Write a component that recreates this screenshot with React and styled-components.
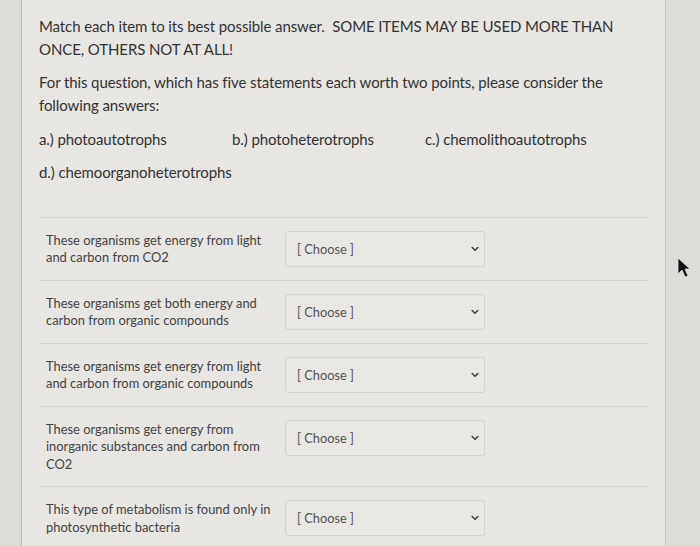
import React from 'react'
import styled, { createGlobalStyle } from 'styled-components'

const statements = [
    ['These organisms get energy from light', 'and carbon from CO2'],
    ['These organisms get both energy and', 'carbon from organic compounds'],
    ['These organisms get energy from light', 'and carbon from organic compounds'],
    ['These organisms get energy from', 'inorganic substances and carbon from', 'CO2'],
    ['This type of metabolism is found only in', 'photosynthetic bacteria'],
]

const App = () => {
    return (
        <Page>
            <GlobalStyle />
            <Panel>
                <Para>
                    Match each item to its best possible answer.&nbsp; SOME ITEMS MAY BE USED MORE THAN
                    <br />ONCE, OTHERS NOT AT ALL!
                </Para>
                <Para>
                    For this question, which has five statements each worth two points, please consider the
                    <br />following answers:
                </Para>
                <Answers>
                    <span>a.) photoautotrophs</span>
                    <span>b.) photoheterotrophs</span>
                    <span>c.) chemolithoautotrophs</span>
                    <span>d.) chemoorganoheterotrophs</span>
                </Answers>
                <List>
                    {statements.map((lines, i) => (
                        <Row key={i}>
                            <Statement>
                                {lines.map((l, j) => <div key={j}>{l}</div>)}
                            </Statement>
                            <Select>
                                <span>[ Choose ]</span>
                                <svg width="8" height="6" viewBox="0 0 8 6">
                                    <path d="M1.2 1.5 L4 4.3 L6.8 1.5" fill="none" stroke="#444" strokeWidth="1.6" strokeLinecap="round" strokeLinejoin="round" />
                                </svg>
                            </Select>
                        </Row>
                    ))}
                </List>
            </Panel>
            <Pointer width="14" height="22" viewBox="0 0 14 22">
                <path d="M1 1 L1 17 L5 13 L8 20 L11 19 L8 12 L13 12 Z" fill="#111" stroke="#e6e5e1" strokeWidth="0.8" />
            </Pointer>
        </Page>
    )
}

export default App

const GlobalStyle = createGlobalStyle`
    body {
        margin: 0;
        background: #dcdbd7;
        font-family: Lato, "Open Sans", sans-serif;
    }
`
const Page = styled.div`
    position: relative;
    width: 700px;
    height: 546px;
    overflow: hidden;
`
const Panel = styled.div`
    margin-left: 21px;
    width: 645px;
    height: 546px;
    box-sizing: border-box;
    padding: 15px 0 0 17px;
    background: #e7e6e2;
    border-left: 1px solid #b9b9b5;
    border-right: 1px solid #c2c2be;
`
const Para = styled.p`
    margin: 0 0 10px;
    font-size: 15px;
    line-height: 23px;
    color: #333;
    letter-spacing: -0.1px;
`
const Answers = styled.div`
    display: grid;
    grid-template-columns: 193px 193px 190px;
    row-gap: 10px;
    margin-top: 11px;
    font-size: 15px;
    line-height: 23px;
    color: #333;
    letter-spacing: -0.1px;
`
const List = styled.div`
    margin: 33px 17px 0 1px;
`
const Row = styled.div`
    display: flex;
    align-items: flex-start;
    gap: 7px;
    padding: 13px 0 13px 6px;
    border-top: 1px solid #d3d3cf;
`
const Statement = styled.div`
    width: 232px;
    padding-top: 1px;
    font-size: 12.9px;
    line-height: 17.4px;
    color: #444;
`
const Select = styled.div`
    width: 200px;
    height: 36px;
    box-sizing: border-box;
    display: flex;
    align-items: center;
    justify-content: space-between;
    padding: 0 5px 0 11px;
    border: 1px solid #d2d2ce;
    border-radius: 3px;
    background: #e8e7e3;
    font-size: 12.8px;
    color: #555;
`
const Pointer = styled.svg`
    position: absolute;
    left: 677px;
    top: 257px;
`
